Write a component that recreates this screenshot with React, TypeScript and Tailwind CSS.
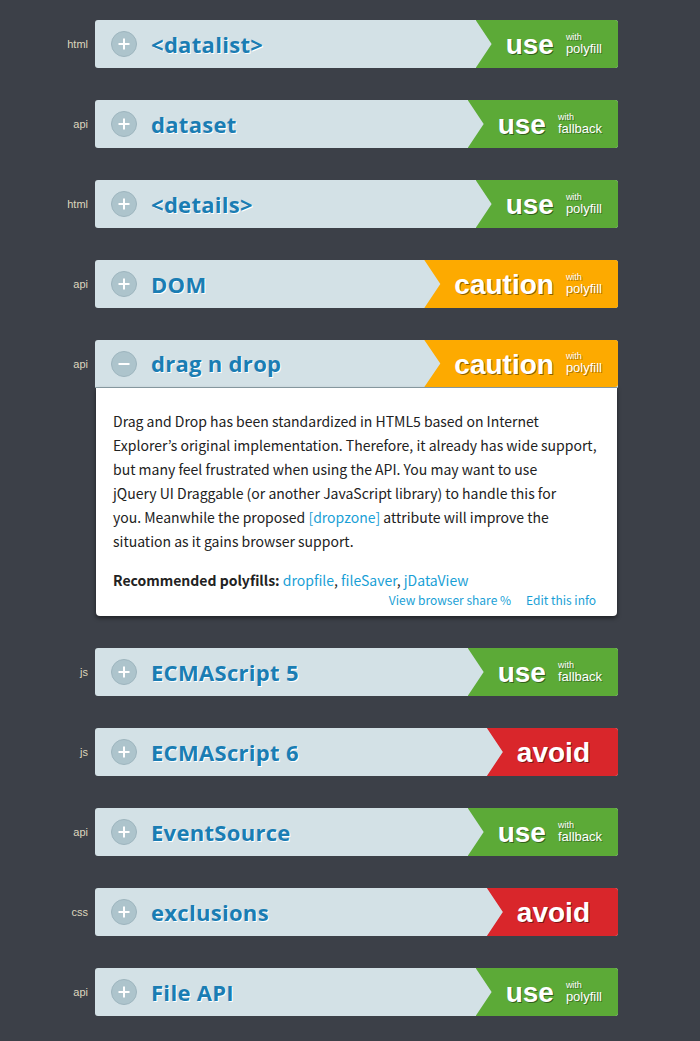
import React from "react";

type Badge = "use" | "caution" | "avoid";
type Item = {
  label: string;
  title: string;
  badge: Badge;
  sub?: string;
  open?: boolean;
};

const items: Item[] = [
  { label: "html", title: "<datalist>", badge: "use", sub: "polyfill" },
  { label: "api", title: "dataset", badge: "use", sub: "fallback" },
  { label: "html", title: "<details>", badge: "use", sub: "polyfill" },
  { label: "api", title: "DOM", badge: "caution", sub: "polyfill" },
  { label: "api", title: "drag n drop", badge: "caution", sub: "polyfill", open: true },
  { label: "js", title: "ECMAScript 5", badge: "use", sub: "fallback" },
  { label: "js", title: "ECMAScript 6", badge: "avoid" },
  { label: "api", title: "EventSource", badge: "use", sub: "fallback" },
  { label: "css", title: "exclusions", badge: "avoid" },
  { label: "api", title: "File API", badge: "use", sub: "polyfill" },
];

const badgeBg: Record<Badge, string> = {
  use: "bg-[#5caa37]",
  caution: "bg-[#fdaa00]",
  avoid: "bg-[#d9262b]",
};

function Circle({ open }: { open?: boolean }) {
  return (
    <div className="w-[26px] h-[26px] rounded-full bg-[#adc4cc] border border-[#9db5be] flex items-center justify-center shrink-0">
      <svg width="14" height="14" viewBox="0 0 14 14">
        <rect x="1.5" y="6" width="11" height="2" fill="#ffffff" />
        {!open && <rect x="6" y="1.5" width="2" height="11" fill="#ffffff" />}
      </svg>
    </div>
  );
}

function BadgeBox({ badge, sub }: { badge: Badge; sub?: string }) {
  return (
    <div
      className={`${badgeBg[badge]} h-full flex items-center pl-[30px] ${sub ? "pr-[16px]" : "pr-[28px]"} rounded-r-[3px] [clip-path:polygon(0_0,100%_0,100%_100%,0_100%,16px_50%)]`}
    >
      <span className="text-white font-bold text-[28px] leading-none pt-[2px] [text-shadow:1px_1px_0_rgba(0,0,0,0.45)]">
        {badge}
      </span>
      {sub && (
        <div className="ml-[12px] flex flex-col text-white leading-none [text-shadow:1px_1px_0_rgba(0,0,0,0.35)] -mt-[1px]">
          <span className="text-[9px] leading-[10px]">with</span>
          <span className="text-[13px] leading-[14px]">{sub}</span>
        </div>
      )}
    </div>
  );
}

function Row({ item }: { item: Item }) {
  return (
    <div className="flex">
      <div className="w-[95px] shrink-0 h-[48px] flex items-center justify-end pr-[7px] text-[11px] text-[#ddd6bd] font-['Liberation_Sans',sans-serif]">
        {item.label}
      </div>
      <div className="w-[523px] shrink-0">
        <div
          className={`h-[48px] bg-[#d3e1e6] flex items-center ${item.open ? "rounded-t-[3px] border-b border-[#8ea2a9]" : "rounded-[3px]"}`}
        >
          <div className="pl-[16px] flex items-center flex-1 min-w-0">
            <Circle open={item.open} />
            <span className="ml-[14px] text-[22px] font-bold text-[#1a7db3] [text-shadow:1px_1px_0_#ffffff] font-['Open_Sans',sans-serif] tracking-[0.3px]">
              {item.title}
            </span>
          </div>
          <BadgeBox badge={item.badge} sub={item.sub} />
        </div>
        {item.open && (
          <div className="mx-[1px] bg-white rounded-b-[4px] shadow-[0_2px_4px_rgba(0,0,0,0.5)] pl-[17px] pr-[21px] pt-[21px] pb-[9px] text-[#222222] font-['Noto_Sans_CJK_JP','Noto_Sans',sans-serif]">
            <p className="text-[14px] leading-[24px]">
              <span className="block whitespace-nowrap">Drag and Drop has been standardized in HTML5 based on Internet</span>
              <span className="block whitespace-nowrap">Explorer’s original implementation. Therefore, it already has wide support,</span>
              <span className="block whitespace-nowrap">but many feel frustrated when using the API. You may want to use</span>
              <span className="block whitespace-nowrap">jQuery UI Draggable (or another JavaScript library) to handle this for</span>
              <span className="block whitespace-nowrap">
                you. Meanwhile the proposed <span className="text-[#1a9fd6]">[dropzone]</span> attribute will improve the
              </span>
              <span className="block whitespace-nowrap">situation as it gains browser support.</span>
            </p>
            <p className="mt-[15px] text-[14px] leading-[24px]">
              <b className="font-bold">Recommended polyfills:</b>{" "}
              <span className="text-[#1a9fd6]">dropfile</span>,{" "}
              <span className="text-[#1a9fd6]">fileSaver</span>,{" "}
              <span className="text-[#1a9fd6]">jDataView</span>
            </p>
            <div className="flex justify-end gap-[15px] text-[12px] leading-[14px] text-[#1a9fd6] mt-[1px]">
              <span>View browser share %</span>
              <span>Edit this info</span>
            </div>
          </div>
        )}
      </div>
    </div>
  );
}

export default function App() {
  return (
    <div className="w-[700px] min-h-[1041px] bg-[#3c4048] pt-[20px] pb-[25px] font-['Liberation_Sans',sans-serif]">
      <div className="flex flex-col gap-[32px]">
        {items.map((it, i) => (
          <Row key={i} item={it} />
        ))}
      </div>
    </div>
  );
}
